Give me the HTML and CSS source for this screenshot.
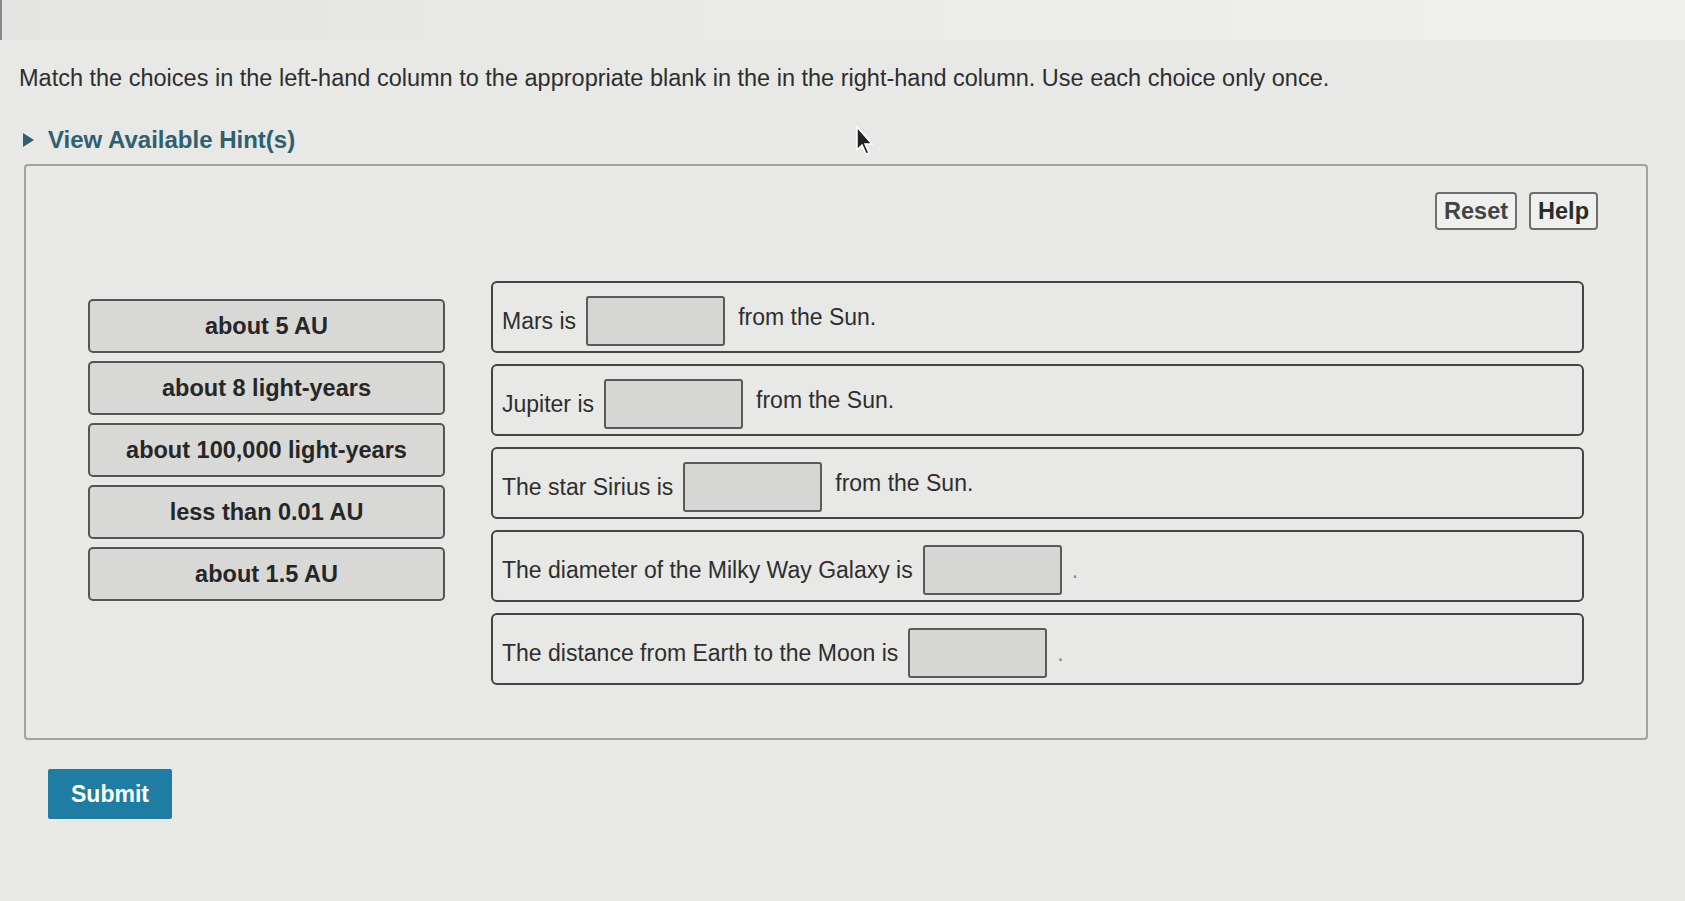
FILE: index.html
```html
<!DOCTYPE html>
<html lang="en">
<head>
  <meta charset="UTF-8">
  <meta name="viewport" content="width=device-width, initial-scale=1.0">
  <title>Matching</title>
  <link rel="stylesheet" href="styles.css">
</head>
<body>
  <div class="top-strip"></div>
  <p class="prompt">Match the choices in the left-hand column to the appropriate blank in the in the right-hand column. Use each choice only once.</p>

  <div class="hint">
    <span class="hint-arrow"></span>
    <span>View Available Hint(s)</span>
  </div>

  <div class="panel">
    <div class="toolbar">
      <button class="tool-btn">Reset</button>
      <button class="tool-btn">Help</button>
    </div>

    <div class="match-area">
      <div class="choices">
        <div class="choice">about 5 AU</div>
        <div class="choice">about 8 light-years</div>
        <div class="choice">about 100,000 light-years</div>
        <div class="choice">less than 0.01 AU</div>
        <div class="choice">about 1.5 AU</div>
      </div>

      <div class="targets">
        <div class="target">
          <span>Mars is</span>
          <span class="blank"></span>
          <span class="after">from the Sun.</span>
        </div>
        <div class="target">
          <span>Jupiter is</span>
          <span class="blank"></span>
          <span class="after">from the Sun.</span>
        </div>
        <div class="target">
          <span>The star Sirius is</span>
          <span class="blank"></span>
          <span class="after">from the Sun.</span>
        </div>
        <div class="target">
          <span>The diameter of the Milky Way Galaxy is</span>
          <span class="blank"></span>
          <span class="dot">.</span>
        </div>
        <div class="target">
          <span>The distance from Earth to the Moon is</span>
          <span class="blank"></span>
          <span class="dot">.</span>
        </div>
      </div>
    </div>
  </div>

  <button class="submit">Submit</button>

  <svg class="cursor" width="20" height="30" viewBox="0 0 20 30">
    <path d="M2 1 L2 24 L7 19 L11 28 L14 27 L10 18 L17 18 Z" fill="#222" stroke="#fff" stroke-width="1.5"/>
  </svg>
</body>
</html>
```

FILE: styles.css
```css
* {
  box-sizing: border-box;
}

body {
  margin: 0;
  padding: 0 37px 0 19px;
  background-color: #e8e8e6;
  color: #2b2b2b;
  font-family: "Liberation Sans", Arial, sans-serif;
  min-height: 901px;
  position: relative;
}

.top-strip {
  height: 40px;
  margin: 0 -37px 0 -19px;
  background: linear-gradient(to right, #e4e4e2, #ececea 60%, #f0f0ee);
  border-left: 2px solid #8a8a8a;
}

.prompt {
  margin: 24px 0 0;
  font-size: 23.5px;
  line-height: 28px;
  color: #2e2e2e;
}

.hint {
  margin-top: 34px;
  display: flex;
  align-items: center;
  gap: 14px;
  font-size: 24px;
  line-height: 28px;
  font-weight: bold;
  color: #2f5f70;
}

.hint-arrow {
  width: 0;
  height: 0;
  border-top: 7px solid transparent;
  border-bottom: 7px solid transparent;
  border-left: 11px solid #2f5f70;
  margin-left: 4px;
}

.panel {
  margin: 10px 0 0 5px;
  border: 2px solid #a2a2a0;
  border-radius: 4px;
  padding: 26px 62px 53px 62px;
}

.toolbar {
  display: flex;
  justify-content: flex-end;
  gap: 12px;
  margin-right: -14px;
}

.tool-btn {
  font-family: "Liberation Sans", Arial, sans-serif;
  font-size: 23.5px;
  font-weight: bold;
  color: #444;
  background: #efefed;
  border: 2px solid #6e6e6e;
  border-radius: 4px;
  height: 38px;
  padding: 0 7px;
}

.tool-btn + .tool-btn {
  color: #2a2a2a;
}

.match-area {
  display: flex;
  gap: 46px;
  margin-top: 51px;
}

.choices {
  width: 357px;
  margin-top: 18px;
  display: flex;
  flex-direction: column;
  gap: 8px;
}

.choice {
  height: 54px;
  display: flex;
  align-items: center;
  justify-content: center;
  background-color: #d8d8d7;
  border: 2px solid #555;
  border-radius: 5px;
  font-size: 23.5px;
  font-weight: bold;
  color: #262626;
}

.targets {
  flex: 1;
  display: flex;
  flex-direction: column;
  gap: 11px;
}

.target {
  height: 72px;
  display: flex;
  align-items: center;
  padding: 8px 9px 0;
  border: 2px solid #444;
  border-radius: 6px;
  font-size: 23px;
  color: #2e2e2e;
}

.blank {
  width: 139px;
  height: 50px;
  margin: 0 13px 0 10px;
  background-color: #d6d6d5;
  border: 2px solid #5a5a5a;
  border-radius: 3px;
}

.after {
  margin-top: -8px;
}

.dot {
  margin-left: -3px;
  color: #888;
}

.submit {
  margin: 29px 0 0 29px;
  width: 124px;
  height: 50px;
  background-color: #1f7ca3;
  color: #fff;
  border: none;
  border-radius: 2px;
  font-family: "Liberation Sans", Arial, sans-serif;
  font-size: 23px;
  font-weight: bold;
}

.cursor {
  position: absolute;
  left: 855px;
  top: 126px;
}
```
